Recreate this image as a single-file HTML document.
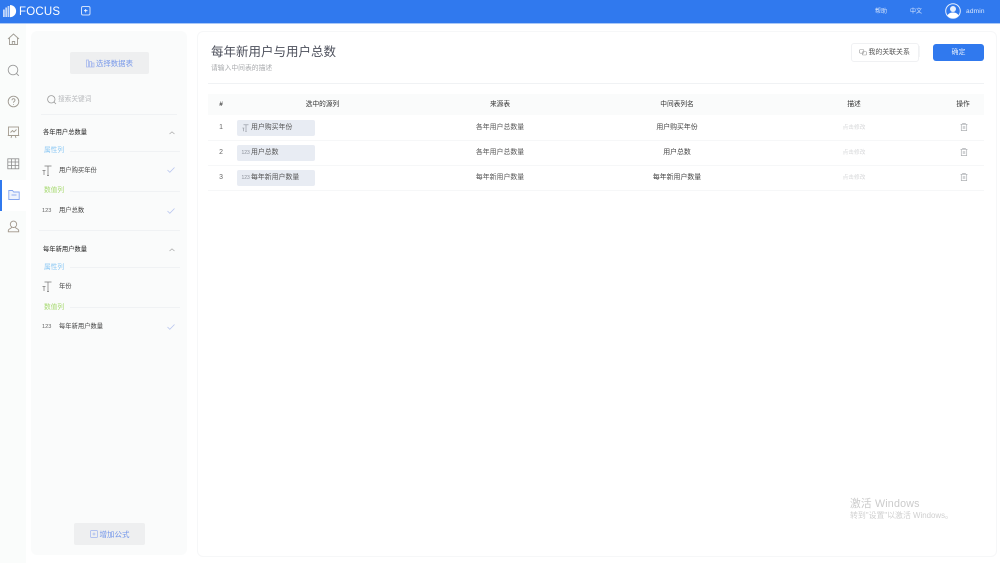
<!DOCTYPE html>
<html><head><meta charset="utf-8">
<style>
html,body{margin:0;padding:0}
body{width:1000px;height:563px;overflow:hidden;position:relative;background:#fff;font-family:"Liberation Sans","Noto Sans CJK SC",sans-serif;color:#333}
.a{position:absolute;white-space:nowrap}
.t{position:absolute;white-space:nowrap;line-height:12px;font-size:6.900px}
.s{font-size:6.300px}
.c{transform:translateX(-50%)}
svg{position:absolute;overflow:visible;fill:none}
.hr{position:absolute;height:1px;background:#f0f2f4}
.tag{position:absolute;left:237px;width:78px;height:16px;background:#e8ecf3;border-radius:2px}
</style></head><body>
<!-- header -->
<div class="a" style="left:0;top:0;width:1000px;height:23px;background:#3079ee"></div>
<div class="a" style="left:0;top:23px;width:1000px;height:1px;background:#a9c8f7"></div>
<svg style="left:0;top:0" width="20" height="23"><path d="M3 9.500h1.800V17H3zM5.300 7.500h1.800V17H5.300zM7.600 6h1.800V17H7.600z" fill="#c3d8fa"/><path d="M10 5a6 6 0 0 1 0 12.200z" fill="#fff"/></svg>
<div class="a" style="left:19px;top:4px;font-size:11.500px;line-height:16px;color:#fff;letter-spacing:.2px">FOCUS</div>
<svg style="left:81px;top:6px" width="10" height="10"><rect x=".5" y=".5" width="8.500" height="8.500" rx="1.500" stroke="#cfe0fb"/><path d="M4.700 3v3.500M3 4.700h3.500" stroke="#fff" stroke-width=".8"/></svg>
<div class="t c" style="left:881px;top:6px;color:#dce9fc;font-size:6px">帮助</div>
<div class="t c" style="left:916px;top:6px;color:#dce9fc;font-size:6px">中文</div>
<svg style="left:945px;top:3px" width="17" height="17"><circle cx="8" cy="8" r="7.300" stroke="#e6effd" stroke-width="1"/><circle cx="8" cy="6" r="3" fill="#e6effd"/><path d="M2.500 12.500c1-2.500 3.500-3 5.500-3s4.500.5 5.500 3a7 7 0 0 1-11 0z" fill="#fff"/></svg>
<div class="t" style="left:966px;top:6px;color:#dce9fc;font-size:6.500px;letter-spacing:.2px">admin</div>

<!-- sidebar -->
<div class="a" style="left:0;top:24px;width:26px;height:539px;background:#fafcfb"></div>
<div class="a" style="left:0;top:180px;width:26px;height:31px;background:#fff"></div>
<div class="a" style="left:0;top:180px;width:2px;height:31px;background:#3079ee"></div>
<svg style="left:7px;top:33px" width="13" height="13" stroke="#a09c94" stroke-width=".9"><path d="M1 6l5.500-5L12 6M2.500 5v6.500h8V5M5.300 11.500V8.500h2.400v3"/></svg>
<svg style="left:7px;top:64px" width="13" height="13" stroke="#9a9a9a" stroke-width=".9"><circle cx="6" cy="6" r="4.800"/><path d="M9.500 9.500l2.300 2.300"/></svg>
<svg style="left:7px;top:95px" width="13" height="13" stroke="#9f9a92" stroke-width=".9"><circle cx="6.500" cy="6.500" r="5.300"/><path d="M5 5.200c0-2 3-2 3 0 0 1.200-1.500 1.200-1.500 2.500M6.500 9v.8"/></svg>
<svg style="left:7px;top:126px" width="13" height="13" stroke="#a39c90" stroke-width=".9"><rect x="1.500" y="1" width="10" height="8.500"/><path d="M3.500 6.500l2-2 1.500 1.500 2.500-2.500M.8 9.500h11.400M4 12l.8-2.500M9 12l-.8-2.500"/></svg>
<svg style="left:7px;top:158px" width="13" height="12" stroke="#8d8d8d" stroke-width=".8"><rect x=".8" y=".8" width="11" height="10"/><path d="M.8 4h11M.8 7.500h11M4.500 .8v10M8.200 .8v10"/></svg>
<svg style="left:8px;top:189px" width="12" height="12" stroke="#86a6ef" stroke-width=".9"><path d="M.8 10.500V1.500h3.700l1.200 1.500h5.500v7.500z" fill="#eef3fd"/><path d="M3.500 6h5"/></svg>
<svg style="left:7px;top:220px" width="13" height="13" stroke="#a0968a" stroke-width=".9"><circle cx="6.500" cy="4.300" r="3.200"/><path d="M4.800 7c0 1.500-3.500 1.800-3.500 3.500v1.300h10.400v-1.300C11.700 8.800 8.200 8.500 8.200 7"/></svg>

<!-- left panel -->
<div class="a" style="left:31px;top:31px;width:156px;height:524px;background:#fafbfb;border-radius:6px"></div>
<div class="a" style="left:70px;top:52px;width:79px;height:22px;background:#eeeff0;border-radius:2px"></div>
<svg style="left:86px;top:59px" width="9" height="9" stroke="#a6b8ee" stroke-width=".8"><path d="M.5 1v7h2V1zM3.500 2.500V8h2V2.500zM6 4v4h2V4z"/></svg>
<div class="t" style="left:96px;top:57.500px;color:#7b9bea;font-size:7.400px">选择数据表</div>
<svg style="left:47px;top:95px" width="10" height="10" stroke="#9a9a9a" stroke-width=".8"><circle cx="4.300" cy="4.300" r="3.700"/><path d="M7 7l2 2"/></svg>
<div class="t" style="left:58px;top:94px;color:#b8babd;font-size:6.700px">搜索关键词</div>
<div class="hr" style="left:41px;top:114px;width:136px"></div>

<div class="t s" style="left:43px;top:127px;color:#222">各年用户总数量</div>
<svg style="left:169px;top:131px" width="6" height="4" stroke="#aaa" stroke-width=".7"><path d="M.5 3L3 .8 5.500 3"/></svg>
<div class="t" style="left:44px;top:145px;color:#8cc8f4;font-size:6.700px">属性列</div>
<div class="hr" style="left:70px;top:150.500px;width:110px"></div>
<svg style="left:42px;top:165px" width="10" height="11" stroke="#777" stroke-width=".7"><path d="M2.500 1h7M6 1v9.500M5 10.500h2M.5 5.500h3M2 5.500v4.500"/></svg>
<div class="t s" style="left:59px;top:164.500px;color:#444">用户购买年份</div>
<svg style="left:167px;top:167px" width="8" height="6" stroke="#b9c6ef" stroke-width=".8"><path d="M.5 3l2.300 2.300L7.500.5"/></svg>
<div class="t" style="left:44px;top:185.300px;color:#a6d96f;font-size:6.700px">数值列</div>
<div class="hr" style="left:70px;top:191px;width:110px"></div>
<div class="t" style="left:42px;top:205px;color:#666;font-size:5.600px">123</div>
<div class="t s" style="left:59px;top:205px;color:#444">用户总数</div>
<svg style="left:167px;top:208px" width="8" height="6" stroke="#b9c6ef" stroke-width=".8"><path d="M.5 3l2.300 2.300L7.500.5"/></svg>
<div class="hr" style="left:39px;top:230px;width:141px"></div>

<div class="t s" style="left:43px;top:243.500px;color:#222">每年新用户数量</div>
<svg style="left:169px;top:248px" width="6" height="4" stroke="#aaa" stroke-width=".7"><path d="M.5 3L3 .8 5.500 3"/></svg>
<div class="t" style="left:44px;top:261.500px;color:#8cc8f4;font-size:6.700px">属性列</div>
<div class="hr" style="left:70px;top:267px;width:110px"></div>
<svg style="left:42px;top:281px" width="10" height="11" stroke="#777" stroke-width=".7"><path d="M2.500 1h7M6 1v9.500M5 10.500h2M.5 5.500h3M2 5.500v4.500"/></svg>
<div class="t s" style="left:59px;top:281px;color:#444">年份</div>
<div class="t" style="left:44px;top:301.700px;color:#a6d96f;font-size:6.700px">数值列</div>
<div class="hr" style="left:70px;top:307px;width:110px"></div>
<div class="t" style="left:42px;top:321px;color:#666;font-size:5.600px">123</div>
<div class="t s" style="left:59px;top:321px;color:#444">每年新用户数量</div>
<svg style="left:167px;top:324px" width="8" height="6" stroke="#b9c6ef" stroke-width=".8"><path d="M.5 3l2.300 2.300L7.500.5"/></svg>

<div class="a" style="left:74px;top:523px;width:71px;height:22px;background:#eeeff0;border-radius:2px"></div>
<svg style="left:90px;top:530px" width="8" height="8" stroke="#9fb4ee" stroke-width=".7"><rect x=".5" y=".5" width="7" height="7" rx="1"/><path d="M4 2.500v3M2.500 4h3"/></svg>
<div class="t" style="left:99.500px;top:528.500px;color:#6f93ea;font-size:7.500px">增加公式</div>

<!-- main panel -->
<div class="a" style="left:197px;top:31px;width:798px;height:524px;background:#fff;border:1px solid #f6f7f8;border-radius:6px"></div>
<div class="t" style="left:211px;top:42.500px;font-size:12.500px;line-height:18px;color:#4c4f5b">每年新用户与用户总数</div>
<div class="t" style="left:211px;top:62.500px;color:#a8aaad;font-size:6.800px">请输入中间表的描述</div>
<div class="a" style="left:851px;top:43px;width:66px;height:17px;border:1px solid #f0f1f3;border-radius:3px;background:#fff"></div>
<div class="a" style="left:919px;top:46px;width:1px;height:11px;background:#f4f5f6"></div>
<svg style="left:859px;top:48.500px" width="8" height="7" stroke="#999" stroke-width=".6"><rect x=".5" y=".5" width="4.300" height="3.700" rx="1"/><rect x="3.300" y="2.500" width="4.200" height="3.500" rx="1"/></svg>
<div class="t" style="left:868.500px;top:46.500px;color:#555">我的关联关系</div>
<div class="a" style="left:933px;top:43.500px;width:51px;height:17px;background:#3079ee;border-radius:3px"></div>
<div class="t c" style="left:958.500px;top:46.500px;color:#dbe8fc;font-size:7px">确定</div>
<div class="hr" style="left:208px;top:83px;width:776px"></div>

<!-- table -->
<div class="a" style="left:208px;top:94px;width:776px;height:21px;background:#fafbfb"></div>
<div class="t c" style="left:221px;top:99px;color:#444;font-weight:bold;font-size:6.500px">#</div>
<div class="t c" style="left:322.500px;top:99px;color:#333;font-size:6.700px">选中的源列</div>
<div class="t c" style="left:500px;top:99px;color:#333;font-size:6.700px">来源表</div>
<div class="t c" style="left:677px;top:99px;color:#333;font-size:6.700px">中间表列名</div>
<div class="t c" style="left:854px;top:99px;color:#333;font-size:6.700px">描述</div>
<div class="t c" style="left:963px;top:99px;color:#333;font-size:6.700px">操作</div>

<div class="tag" style="top:119.500px"></div>
<div class="tag" style="top:144.500px"></div>
<div class="tag" style="top:169.500px"></div>
<div class="hr" style="left:208px;top:139.500px;width:776px;background:#f6f7f8"></div>
<div class="hr" style="left:208px;top:164.500px;width:776px;background:#f6f7f8"></div>
<div class="hr" style="left:208px;top:189.500px;width:776px;background:#f6f7f8"></div>

<div class="t c" style="left:221px;top:121.500px;color:#666">1</div>
<div class="t c" style="left:221px;top:146.500px;color:#666">2</div>
<div class="t c" style="left:221px;top:171.500px;color:#666">3</div>

<svg style="left:242px;top:124px" width="7" height="8" stroke="#8a8f98" stroke-width=".6"><path d="M1.500.8h5M4 .8v6.500M3.300 7.300h1.400M.3 4h2M1.300 4v3.300"/></svg>
<div class="t" style="left:251px;top:121.500px;color:#555">用户购买年份</div>
<div class="t" style="left:241.500px;top:147px;color:#8a8f98;font-size:5px">123</div>
<div class="t" style="left:251px;top:146.500px;color:#555">用户总数</div>
<div class="t" style="left:241.500px;top:172px;color:#8a8f98;font-size:5px">123</div>
<div class="t" style="left:251px;top:171.500px;color:#555">每年新用户数量</div>

<div class="t c" style="left:500px;top:121.500px;color:#555">各年用户总数量</div>
<div class="t c" style="left:500px;top:146.500px;color:#555">各年用户总数量</div>
<div class="t c" style="left:500px;top:171.500px;color:#555">每年新用户数量</div>

<div class="t c" style="left:677px;top:121.500px;color:#444">用户购买年份</div>
<div class="t c" style="left:677px;top:146.500px;color:#444">用户总数</div>
<div class="t c" style="left:677px;top:171.500px;color:#444">每年新用户数量</div>

<div class="t c" style="left:854px;top:121.500px;color:#d5d6d8;font-size:5.700px">点击修改</div>
<div class="t c" style="left:854px;top:146.500px;color:#d5d6d8;font-size:5.700px">点击修改</div>
<div class="t c" style="left:854px;top:171.500px;color:#d5d6d8;font-size:5.700px">点击修改</div>

<svg style="left:960px;top:123px" width="8" height="8" stroke="#aeb0b4" stroke-width=".7"><path d="M.5 1.300h7M2.700 1.300V.4h2.600v.9M1.300 1.300V7.600h5.400V1.300M3.200 3v3M4.800 3v3"/></svg>
<svg style="left:960px;top:148px" width="8" height="8" stroke="#aeb0b4" stroke-width=".7"><path d="M.5 1.300h7M2.700 1.300V.4h2.600v.9M1.300 1.300V7.600h5.400V1.300M3.200 3v3M4.800 3v3"/></svg>
<svg style="left:960px;top:173px" width="8" height="8" stroke="#aeb0b4" stroke-width=".7"><path d="M.5 1.300h7M2.700 1.300V.4h2.600v.9M1.300 1.300V7.600h5.400V1.300M3.200 3v3M4.800 3v3"/></svg>

<!-- watermark -->
<div class="t" style="left:850px;top:497px;color:#cbcbcb;font-size:10.700px;line-height:14px;letter-spacing:.2px">激活 Windows</div>
<div class="t" style="left:850px;top:510px;color:#cfcfcf;font-size:7.900px">转到"设置"以激活 Windows。</div>
</body></html>
